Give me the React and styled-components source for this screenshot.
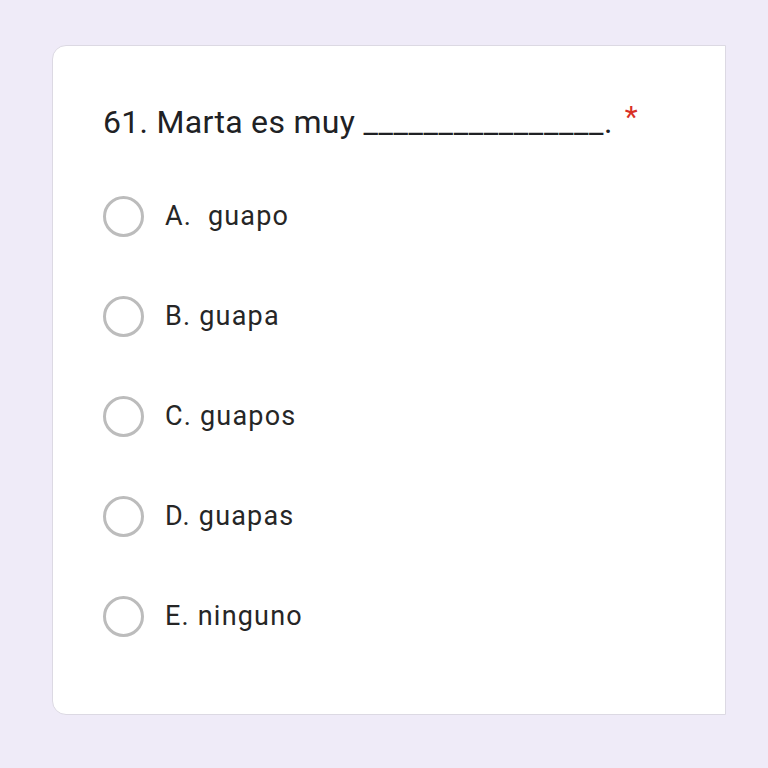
import React from "react";
import styled, { createGlobalStyle } from "styled-components";

const GlobalStyle = createGlobalStyle`
  html, body {
    margin: 0;
    padding: 0;
    background: #efebf8;
  }
  body {
    font-family: Roboto, "Noto Sans", Arial, sans-serif;
  }
`;

const Page = styled.div`
  width: 768px;
  height: 768px;
  box-sizing: border-box;
  padding: 45px 42px 0 52px;
  overflow: hidden;
`;

const Card = styled.div`
  background: #fff;
  border: 1px solid #dcd9e3;
  border-radius: 14px 0 0 14px;
  box-sizing: border-box;
  height: 670px;
  padding: 56px 50px 0 50px;
`;

const Title = styled.div`
  font-size: 32px;
  color: #202124;
  line-height: 40px;
  letter-spacing: 0.3px;
  display: flex;
  align-items: flex-start;
`;

const Blank = styled.span`
  letter-spacing: 0.6px;
`;

const Star = styled.span`
  color: #d93025;
  font-size: 30px;
  margin-left: 12px;
  line-height: 30px;
`;

const Options = styled.div`
  margin-top: 53px;
  display: flex;
  flex-direction: column;
  gap: 58px;
`;

const Option = styled.label`
  display: flex;
  align-items: center;
  gap: 21px;
  height: 42px;
`;

const Radio = styled.span`
  width: 41px;
  height: 41px;
  box-sizing: border-box;
  border-radius: 50%;
  border: 3px solid #bcbcbc;
  flex: none;
`;

const Label = styled.span`
  font-size: 27px;
  letter-spacing: 1.2px;
  color: #262626;
  white-space: pre;
`;

const options = ["A.  guapo", "B. guapa", "C. guapos", "D. guapas", "E. ninguno"];

export default function App() {
  return (
    <>
      <GlobalStyle />
      <Page>
        <Card>
          <Title>
            <span>
              61. Marta es muy <Blank>________________</Blank>.
            </span>
            <Star>*</Star>
          </Title>
          <Options>
            {options.map((o) => (
              <Option key={o}>
                <Radio />
                <Label>{o}</Label>
              </Option>
            ))}
          </Options>
        </Card>
      </Page>
    </>
  );
}
